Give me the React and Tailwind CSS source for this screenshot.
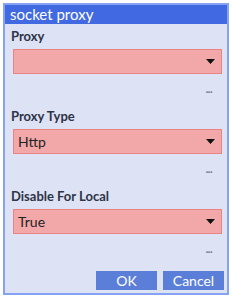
import React from 'react';

const Caret = () => (
  <svg width="9" height="5" viewBox="0 0 9 5" className="shrink-0">
    <path d="M0 0h9L4.5 5z" fill="#111" />
  </svg>
);

const Field = ({ label, value }) => (
  <div className="flex flex-col">
    <div className="text-[13px] font-bold text-[#2e3345] leading-[18px] pl-[6px]">{label}</div>
    <div className="mt-[4px] ml-[8px] mr-[5px] h-[25px] bg-[#f2a8a8] border border-[#e98484] flex items-center justify-between pl-[4px] pr-[6px]">
      <span className="text-[14px] text-[#222]">{value}</span>
      <Caret />
    </div>
    <div className="h-[28px] flex items-center justify-end pr-[15px]">
      <span className="text-[11px] leading-none font-bold text-[#778] tracking-[-0.5px]">...</span>
    </div>
  </div>
);

export default function App() {
  return (
    <div className="w-[232px] h-[300px] bg-white pt-[3px] pl-[3px]" style={{ fontFamily: 'Lato, "Open Sans", sans-serif' }}>
      <div className="w-[226px] h-[292px] border-2 border-[#86a2f3] bg-[#dde2f5] flex flex-col">
        <div className="h-[19px] bg-[#4169e1] text-white text-[15px] leading-[19px] pl-[5px]">socket proxy</div>
        <div className="pt-[3px] flex flex-col">
          <Field label="Proxy" value="" />
          <div className="h-[5px]" />
          <Field label="Proxy Type" value="Http" />
          <div className="h-[5px]" />
          <Field label="Disable For Local" value="True" />
        </div>
        <div className="flex justify-end gap-[6px] pr-[3px] mt-[9px]">
          <button className="w-[61px] h-[19px] bg-[#5b7fd8] text-white text-[14px] leading-[19px]">OK</button>
          <button className="w-[61px] h-[19px] bg-[#5b7fd8] text-white text-[14px] leading-[19px]">Cancel</button>
        </div>
      </div>
    </div>
  );
}
